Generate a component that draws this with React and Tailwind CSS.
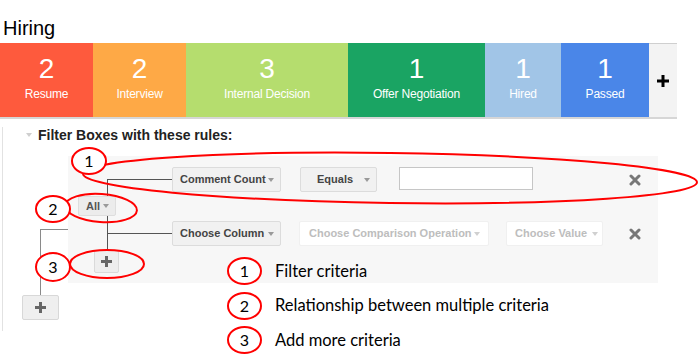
import React from 'react';

const stages = [
  { n: '2', label: 'Resume', cls: 'w-[93px] bg-[#fe5a3d]' },
  { n: '2', label: 'Interview', cls: 'w-[93px] bg-[#fea946]' },
  { n: '3', label: 'Internal Decision', cls: 'w-[162px] bg-[#b5dd6e]' },
  { n: '1', label: 'Offer Negotiation', cls: 'w-[137px] bg-[#1aa463]' },
  { n: '1', label: 'Hired', cls: 'w-[76px] bg-[#a1c5e7]' },
  { n: '1', label: 'Passed', cls: 'w-[88px] bg-[#4a86e8]' },
];

const Caret = ({ light }) => (
  <span
    className={`ml-auto h-0 w-0 border-x-[3px] border-t-[4px] border-x-transparent ${
      light ? 'border-t-[#d0d0d0]' : 'border-t-[#999]'
    }`}
  />
);

const Plus = ({ color = '#666', size = 11, t = 3 }) => (
  <svg width={size} height={size} viewBox={`0 0 ${size} ${size}`}>
    <rect x={(size - t) / 2} y="0" width={t} height={size} fill={color} />
    <rect x="0" y={(size - t) / 2} width={size} height={t} fill={color} />
  </svg>
);

const Remove = () => (
  <svg width="12" height="12" viewBox="0 0 12 12">
    <path d="M2 2 L10 10 M10 2 L2 10" stroke="#777" strokeWidth="3" strokeLinecap="round" />
  </svg>
);

const App = () => {
  return (
    <div className="relative h-[356px] w-[700px] overflow-hidden bg-white font-['Liberation_Sans',Arial,sans-serif]">
      <div className="h-[43px] pl-[3px] pt-[17px] text-[20px] leading-[23px] text-black">Hiring</div>

      {/* stage bar */}
      <div className="flex h-[74px] w-[677px]">
        {stages.map((s) => (
          <div key={s.label} className={`flex flex-col items-center pt-[12px] text-white ${s.cls}`}>
            <div className="h-[28px] text-[28px] leading-none">{s.n}</div>
            <div className="mt-[5px] text-[12px] leading-none tracking-[-0.2px]">{s.label}</div>
          </div>
        ))}
        <div className="flex w-[28px] items-center justify-center border-t border-[#cfcfcf] bg-[#f3f3f3]">
          <Plus color="#000" size={12} t={3} />
        </div>
      </div>
      <div className="h-[2px] w-[677px] bg-[#d6d6d6]" />

      {/* filter section */}
      <div className="relative ml-[2px] h-[204px] border-l border-[#e2e2e2]">
        <svg className="absolute left-0 top-0" width="80" height="204">
          <path d="M37.5 102 V176 M37 102.5 H66" stroke="#8a8a8a" strokeWidth="1" fill="none" />
        </svg>

        <div className="relative mt-[8px] flex h-[16px] items-center pl-[23px]">
          <span className="h-0 w-0 border-x-[3px] border-t-[4px] border-x-transparent border-t-[#cfcfcf]" />
          <span className="ml-[6px] text-[14px] font-bold leading-[16px] text-[#222]">Filter Boxes with these rules:</span>
        </div>

        <div className="relative ml-[65px] mt-[13px] flex h-[127px] w-[590px] bg-[#f7f7f7]">
          <svg className="absolute left-0 top-0" width="110" height="127">
            <path d="M39.5 23 V94 M39 23.5 H104 M39 77.5 H104" stroke="#555" strokeWidth="1" fill="none" />
          </svg>

          <div className="relative flex w-[104px] flex-col">
            <div className="ml-[10px] mt-[40px] flex h-[20px] w-[38px] items-center rounded-[2px] border border-[#dedede] bg-[#ececec] pl-[7px] pr-[6px] text-[11px] font-bold text-[#555]">
              All
              <Caret />
            </div>
            <div className="ml-[26px] mt-[34px] flex h-[23px] w-[25px] items-center justify-center rounded-[2px] border border-[#dadada] bg-[#eeeeee]">
              <Plus />
            </div>
          </div>

          <div className="relative flex flex-1 flex-col gap-[29px] pr-[17px] pt-[11px]">
            <div className="flex h-[25px] items-start">
              <div className="flex h-[25px] w-[109px] items-center rounded-[2px] border border-[#dcdcdc] bg-[#f1f1f1] pl-[7px] pr-[6px] text-[11px] font-bold text-[#444]">
                Comment Count
                <Caret />
              </div>
              <div className="ml-[19px] flex h-[25px] w-[77px] items-center rounded-[2px] border border-[#dcdcdc] bg-[#f1f1f1] pl-[16px] pr-[6px] text-[11px] font-bold text-[#444]">
                Equals
                <Caret />
              </div>
              <div className="ml-[22px] h-[23px] w-[134px] border border-[#c6c6c6] bg-white" />
              <div className="ml-auto flex h-[25px] items-center">
                <Remove />
              </div>
            </div>

            <div className="flex h-[25px] items-start">
              <div className="flex h-[25px] w-[109px] items-center rounded-[2px] border border-[#dcdcdc] bg-[#f1f1f1] pl-[7px] pr-[6px] text-[11px] font-bold text-[#444]">
                Choose Column
                <Caret />
              </div>
              <div className="ml-[18px] flex h-[25px] w-[190px] items-center rounded-[2px] border border-[#f0f0f0] bg-white pl-[9px] pr-[8px] text-[11px] font-bold text-[#bdbdbd]">
                Choose Comparison Operation
                <Caret light />
              </div>
              <div className="ml-[17px] flex h-[25px] w-[97px] items-center rounded-[2px] border border-[#f0f0f0] bg-white pl-[8px] pr-[4px] text-[11px] font-bold text-[#bdbdbd]">
                Choose Value
                <Caret light />
              </div>
              <div className="ml-auto flex h-[25px] items-center">
                <Remove />
              </div>
            </div>
          </div>
        </div>

        <div className="relative ml-[19px] mt-[12px] flex h-[25px] w-[37px] items-center justify-center rounded-[2px] border border-[#d8d8d8] bg-[#efefef]">
          <Plus />
        </div>
      </div>

      {/* red annotations */}
      <svg className="pointer-events-none absolute left-0 top-0" width="700" height="356">
        <g fill="none" stroke="#ff0000" strokeWidth="2">
          <ellipse cx="390" cy="178" rx="307" ry="25" transform="rotate(0.8 390 178)" />
          <ellipse cx="101" cy="208" rx="36" ry="14" transform="rotate(4 101 208)" />
          <ellipse cx="107" cy="264" rx="37" ry="14" />
        </g>
      </svg>

      <div className="pointer-events-none absolute inset-0 font-['Lato','Open_Sans',sans-serif] text-[16px] text-black">
        <div className="absolute left-[71px] top-[147px] flex h-[28px] w-[36px] items-center justify-center rounded-[50%] border-2 border-[#ff0000] bg-white">1</div>
        <div className="absolute left-[35px] top-[195px] flex h-[28px] w-[36px] items-center justify-center rounded-[50%] border-2 border-[#ff0000] bg-white">2</div>
        <div className="absolute left-[35px] top-[252px] flex h-[30px] w-[36px] items-center justify-center rounded-[50%] border-2 border-[#ff0000] bg-white">3</div>

        <div className="absolute left-[227px] top-[254px] flex flex-col">
          {['Filter criteria', 'Relationship between multiple criteria', 'Add more criteria'].map((t, i) => (
            <div key={t} className="flex h-[34.5px] items-center">
              <div className="flex h-[28px] w-[35px] items-center justify-center rounded-[50%] border-2 border-[#ff0000] bg-white">
                {i + 1}
              </div>
              <span className="ml-[13px] text-[16.5px]">{t}</span>
            </div>
          ))}
        </div>
      </div>
    </div>
  );
};

export default App;
